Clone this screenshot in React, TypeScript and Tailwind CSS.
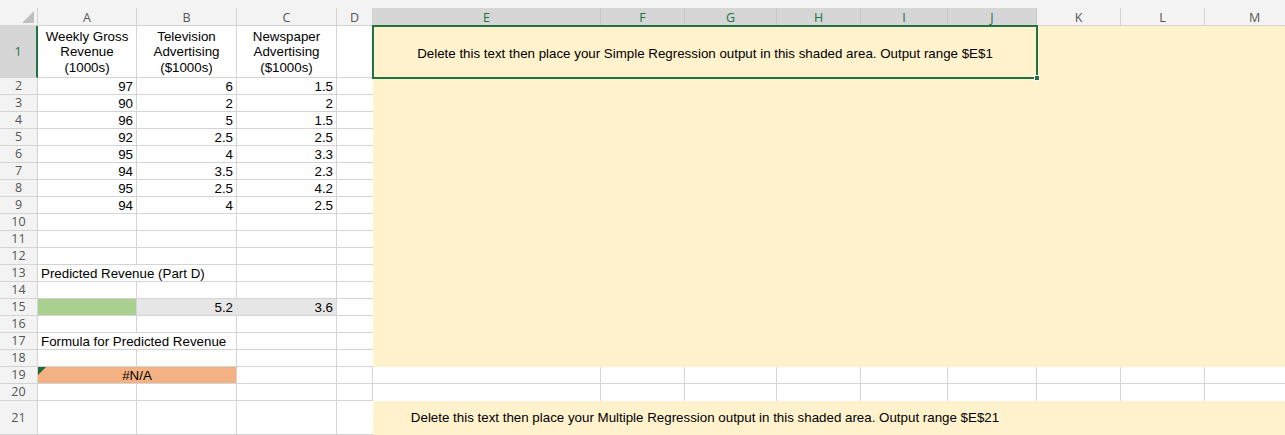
import React from "react";

const cellFont = "font-['Liberation_Sans',Arial,sans-serif] text-[13.33px] leading-[14px] text-black";
const headFont = "font-['Open_Sans','Noto_Sans',sans-serif] text-[12.5px]";

const columns = ["A", "B", "C", "D", "E", "F", "G", "H", "I", "J", "K", "L", "M"];
const selectedCols = ["E", "F", "G", "H", "I", "J"];

const rows: [string, string, string][] = [
  ["97", "6", "1.5"],
  ["90", "2", "2"],
  ["96", "5", "1.5"],
  ["92", "2.5", "2.5"],
  ["95", "4", "3.3"],
  ["94", "3.5", "2.3"],
  ["95", "2.5", "4.2"],
  ["94", "4", "2.5"],
];

function ColHead({ label }: { label: string }) {
  const sel = selectedCols.includes(label);
  return (
    <div
      className={
        sel
          ? `flex items-center justify-center pt-[3px] border-r border-b border-[#c8c8c8] bg-[#d6d6d6] text-[#217346] ${headFont}`
          : `flex items-center justify-center pt-[3px] border-r border-b border-[#d4d4d4] bg-[#f3f3f3] text-[#555] ${headFont}`
      }
    >
      {label}
    </div>
  );
}

function RowHead({ n }: { n: number }) {
  return (
    <div
      className={
        n === 1
          ? `flex items-center justify-center pt-[1px] border-b border-r-2 border-b-[#d4d4d4] border-r-[#217346] bg-[#d6d6d6] text-[#217346] ${headFont}`
          : `flex items-center justify-center pt-[1px] border-b border-r border-[#d4d4d4] bg-[#f3f3f3] text-[#555] ${headFont}`
      }
    >
      {n}
    </div>
  );
}

// plain white cell with gridlines
function Cell({ children, noRight }: { children?: React.ReactNode; noRight?: boolean }) {
  return (
    <div
      className={
        noRight
          ? `flex items-end justify-end pr-[3px] border-b border-[#d4d4d4] ${cellFont}`
          : `flex items-end justify-end pr-[3px] border-r border-b border-[#d4d4d4] ${cellFont}`
      }
    >
      {children}
    </div>
  );
}

function Label({ text }: { text: string }) {
  return (
    <div className={`flex items-end pl-[3px] whitespace-nowrap overflow-visible border-b border-[#d4d4d4] ${cellFont}`}>
      {text}
    </div>
  );
}

export default function App() {
  return (
    <div className="w-[1285px] h-[435px] overflow-hidden bg-white">
      <div className="grid grid-cols-[38px_99px_100px_100px_36px_228px_84px_92px_84px_87px_89px_84px_84px_100px] grid-rows-[8px_18px_52px_repeat(19,17px)_34px]">
        {/* strip above the headers */}
        <div className="col-span-14 bg-[#f3f3f3]" />

        {/* column headers */}
        <div className="flex items-end justify-end pr-[3px] pb-[2px] border-r border-b border-[#d4d4d4] bg-[#f3f3f3]">
          <svg width="12" height="12" viewBox="0 0 12 12">
            <polygon points="12,0 12,12 0,12" fill="#bfbfbf" />
          </svg>
        </div>
        {columns.map((c) => (
          <ColHead key={c} label={c} />
        ))}

        {/* row 1 */}
        <RowHead n={1} />
        {["Weekly Gross|Revenue|(1000s)", "Television|Advertising|($1000s)", "Newspaper|Advertising|($1000s)"].map((t) => (
          <div
            key={t}
            className={`flex flex-col items-center justify-end pb-[2px] text-center leading-[15.3px] border-r border-b border-[#d4d4d4] font-['Liberation_Sans',Arial,sans-serif] text-[13.33px] text-black`}
          >
            {t.split("|").map((line) => (
              <span key={line}>{line}</span>
            ))}
          </div>
        ))}
        <div className="border-b border-[#d4d4d4]" />
        <div className={`relative z-10 col-span-6 flex items-center justify-center pt-[4px] bg-[#fff2cc] ${cellFont}`}>
          Delete this text then place your Simple Regression output in this shaded area. Output range $E$1
          <div className="absolute -left-px -top-px -right-px -bottom-px border-2 border-[#217346] pointer-events-none" />
          <div className="absolute -right-[3px] -bottom-[3px] w-[6px] h-[6px] bg-[#217346] border border-white" />
        </div>
        <div className="col-span-3 bg-[#fff2cc]" />

        {/* rows 2-9 */}
        {rows.map((r, i) => (
          <React.Fragment key={i}>
            <RowHead n={i + 2} />
            <Cell>{r[0]}</Cell>
            <Cell>{r[1]}</Cell>
            <Cell>{r[2]}</Cell>
            <Cell noRight />
            {i === 0 && <div className="col-span-9 row-span-17 bg-[#fff2cc]" />}
          </React.Fragment>
        ))}

        {/* rows 10-12 */}
        {[10, 11, 12].map((n) => (
          <React.Fragment key={n}>
            <RowHead n={n} />
            <Cell />
            <Cell />
            <Cell />
            <Cell noRight />
          </React.Fragment>
        ))}

        <RowHead n={13} />
        <Label text="Predicted Revenue (Part D)" />
        <Cell />
        <Cell />
        <Cell noRight />

        <RowHead n={14} />
        <Cell />
        <Cell />
        <Cell />
        <Cell noRight />

        <RowHead n={15} />
        <div className="border-r border-b border-[#d4d4d4] bg-[#a9d08e]" />
        <div className={`flex items-end justify-end pr-[4px] border-b border-[#d4d4d4] bg-[#e7e6e6] ${cellFont}`}>5.2</div>
        <div className={`flex items-end justify-end pr-[3px] border-r border-b border-[#d4d4d4] bg-[#e7e6e6] ${cellFont}`}>3.6</div>
        <Cell noRight />

        <RowHead n={16} />
        <Cell />
        <Cell />
        <Cell />
        <Cell noRight />

        <RowHead n={17} />
        <Label text="Formula for Predicted Revenue" />
        <Cell />
        <Cell />
        <Cell noRight />

        <RowHead n={18} />
        <Cell />
        <Cell />
        <Cell />
        <Cell noRight />

        {/* row 19 */}
        <RowHead n={19} />
        <div className={`relative col-span-2 flex items-end justify-center border-r border-b border-[#d4d4d4] bg-[#f4b183] ${cellFont}`}>
          <svg className="absolute left-0 top-0" width="8" height="8" viewBox="0 0 8 8">
            <polygon points="0,0 8,0 0,8" fill="#1f6b35" />
          </svg>
          #N/A
        </div>
        <Cell />
        <Cell />
        {columns.slice(4).map((c) => (
          <div key={c} className="border-r border-b border-[#d4d4d4]" />
        ))}

        {/* row 20 */}
        <RowHead n={20} />
        <Cell />
        <Cell />
        <Cell />
        <Cell />
        {columns.slice(4).map((c) => (
          <div key={c} className="border-r border-[#d4d4d4]" />
        ))}

        {/* row 21 */}
        <RowHead n={21} />
        <Cell />
        <Cell />
        <Cell />
        <Cell noRight />
        <div className={`col-span-6 flex items-center justify-center bg-[#fff2cc] ${cellFont}`}>
          Delete this text then place your Multiple Regression output in this shaded area. Output range $E$21
        </div>
        <div className="col-span-3 bg-[#fff2cc]" />
      </div>
    </div>
  );
}
